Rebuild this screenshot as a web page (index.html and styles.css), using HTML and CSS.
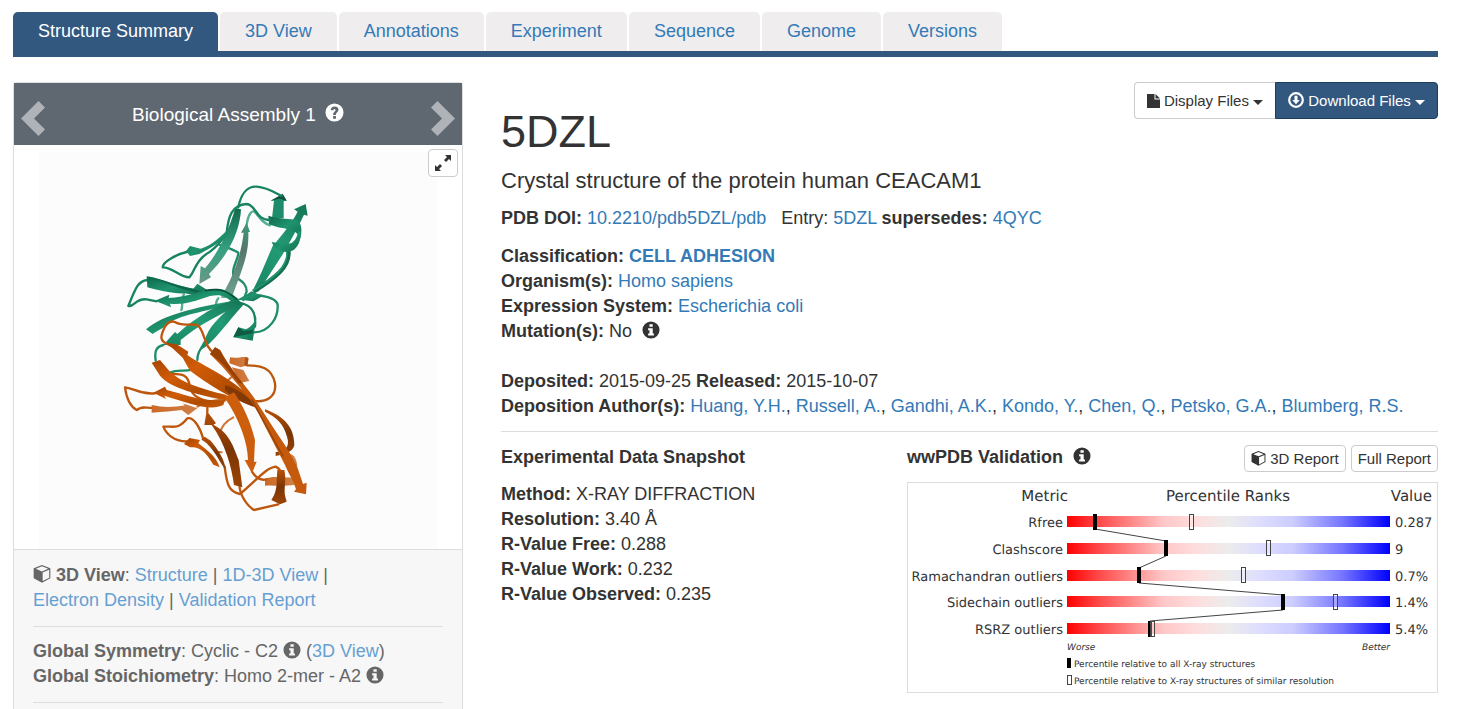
FILE: index.html
```html
<!DOCTYPE html>
<html lang="en">
<head>
	<meta charset="utf-8">
	<title>5DZL: Crystal structure of the protein human CEACAM1</title>
	<link rel="stylesheet" href="styles.css">
</head>
<body>
	<!-- shared icons -->
	<svg class="sprite" aria-hidden="true">
		<symbol id="icon-info" viewBox="0 0 20 20">
			<path fill="currentColor" fill-rule="evenodd" d="M10 .5a9.500 9.500 0 1 0 0 19a9.500 9.500 0 0 0 0-19zM8.300 3.500h3.600v3H8.300zM6.800 8h5.100v6h1.400v2.200H6.800V14h1.500v-3.800H6.800z"/>
		</symbol>
		<symbol id="icon-question" viewBox="0 0 20 20">
			<path fill="currentColor" fill-rule="evenodd" d="M10 .5a9.500 9.500 0 1 0 0 19a9.500 9.500 0 0 0 0-19zM8.500 13.800h3v2.700h-3zM6 7.700C6.200 5 7.700 3.800 10.100 3.800c2.500 0 4.100 1.300 4.100 3.400c0 2.600-2.700 2.800-2.700 5.400h-3c0-3.300 2.500-3.500 2.500-5.100c0-.7-.4-1.100-1-1.100c-.8 0-1 .5-1.100 1.300z"/>
		</symbol>
		<symbol id="icon-cube" viewBox="1 1 18 19">
			<path fill="currentColor" fill-rule="evenodd" d="M10 1l8.800 3.500v10.500L10 19.700L1.200 15V4.500zM10 2.300L3.500 5L10 7.800L16.500 5zM10.700 9v9l6.900-3.600V6.100z"/>
		</symbol>
	</svg>

	<nav>
		<ul class="tabs">
			<li><a class="tab active" href="#summary">Structure Summary</a></li>
			<li><a class="tab" href="#view">3D View</a></li>
			<li><a class="tab" href="#annotations">Annotations</a></li>
			<li><a class="tab" href="#experiment">Experiment</a></li>
			<li><a class="tab" href="#sequence">Sequence</a></li>
			<li><a class="tab" href="#genome">Genome</a></li>
			<li><a class="tab" href="#versions">Versions</a></li>
		</ul>
	</nav>

	<main class="columns">
		<section class="assembly">
			<div class="assembly-header">
				<button class="arrow" aria-label="Previous">
					<svg width="24" height="35" viewBox="0 0 24 35"><path fill="currentColor" d="M17.500 0L24 6.500L13 17.500L24 28.500L17.500 35L0 17.500z"/></svg>
				</button>
				<div class="assembly-title">Biological Assembly 1 <svg class="icon-help"><use href="#icon-question"/></svg></div>
				<button class="arrow" aria-label="Next">
					<svg width="24" height="35" viewBox="0 0 24 35"><path fill="currentColor" d="M6.500 0L24 17.500L6.500 35L0 28.500L11 17.500L0 6.500z"/></svg>
				</button>
			</div>
			<div class="assembly-image">
				<button class="expand" aria-label="Full screen">
					<svg width="16" height="16" viewBox="0 0 16 16"><path fill="currentColor" d="M10 0h6v6l-2-2L11 7L9 5l3-3zM0 10l2 2L5 9l2 2l-3 3L6 16H0z"/></svg>
				</button>
				<svg class="protein" viewBox="-213 -54 1194 1191" role="img" aria-label="Ribbon diagram of 5DZL">
					<defs>
						<linearGradient id="g1" x1="0" y1="0" x2="1" y2="1">
							<stop offset="0" stop-color="#0d654a"/>
							<stop offset=".5" stop-color="#1f946f"/>
							<stop offset="1" stop-color="#12704f"/>
						</linearGradient>
						<linearGradient id="g2" x1="1" y1="0" x2="0" y2="1">
							<stop offset="0" stop-color="#157556"/>
							<stop offset=".5" stop-color="#229b76"/>
							<stop offset="1" stop-color="#1a8562"/>
						</linearGradient>
						<linearGradient id="g3" x1="0" y1="0" x2="0" y2="1">
							<stop offset="0" stop-color="#126a4d"/>
							<stop offset=".55" stop-color="#35a080"/>
							<stop offset="1" stop-color="#6a9886"/>
						</linearGradient>
						<linearGradient id="g4" x1="0" y1="0" x2="0" y2="1">
							<stop offset="0" stop-color="#3d9a7b"/>
							<stop offset=".35" stop-color="#53776b"/>
							<stop offset="1" stop-color="#6fa390"/>
						</linearGradient>
						<linearGradient id="o1" x1="0" y1="0" x2="1" y2="1">
							<stop offset="0" stop-color="#a54400"/>
							<stop offset=".35" stop-color="#d15c08"/>
							<stop offset=".7" stop-color="#b04c00"/>
							<stop offset="1" stop-color="#c75a0c"/>
						</linearGradient>
						<linearGradient id="o2" x1="0" y1="0" x2="0" y2="1">
							<stop offset="0" stop-color="#b95008"/>
							<stop offset=".5" stop-color="#7a3505"/>
							<stop offset="1" stop-color="#9c4404"/>
						</linearGradient>
						<linearGradient id="o3" x1="0" y1="0" x2="1" y2="0">
							<stop offset="0" stop-color="#cb6a28"/>
							<stop offset="1" stop-color="#cf8047"/>
						</linearGradient>
					</defs>

					<!-- chain A -->
					<g fill="none" stroke="#1f8c6a" stroke-width="7" stroke-linecap="round" stroke-linejoin="round">
						<path stroke="#55ad92" d="M410 165C414 135 425 118 435 126C450 145 462 162 480 166"/>
						<path d="M330 225C350 232 370 238 385 248C385 270 365 290 370 315C385 330 410 335 410 365L400 390"/>
						<path stroke="#55ad92" d="M222 372C212 390 220 408 214 420M325 385C315 395 318 405 320 415"/>
						<path d="M160 525C135 530 134 550 137 572M285 515C270 540 262 550 262 570"/>
						<path d="M180 608C205 596 220 606 245 599"/>
						<path d="M435 375C470 378 500 385 503 405C505 440 480 488 430 487"/>
					</g>
					<path fill="url(#g4)" d="M410 158L420 186H415C418 260 390 310 365 385L332 383C370 320 392 260 401 188L393 188z"/>
					<path fill="url(#g3)" d="M378 115L393 118C390 180 360 250 297 312L303 322L268 342L272 288L285 295C330 240 352 190 375 118z"/>
					<path fill="url(#g2)" d="M552 118L587 102L593 137L582 134C560 180 545 205 520 250L445 365L428 362C450 320 470 270 488 228C520 190 545 160 563 125z"/>
					<path fill="none" stroke="#147152" stroke-width="13" d="M535 240C542 290 495 325 430 365"/>
					<path fill="none" stroke="#249a76" stroke-width="4" d="M530 245C537 290 490 325 428 362"/>
					<path fill="#1d8c6a" d="M482 92L518 72L530 92L521 94V145H486L492 92z"/>
					<path fill="#0d513c" d="M482 92L518 72L530 92L510 86z"/>
					<path fill="url(#g1)" d="M475 137C510 148 540 145 560 150C575 160 578 180 570 205C560 170 510 180 477 162z"/>
					<path fill="url(#g1)" d="M485 216C510 220 530 223 545 219C560 208 562 196 565 180L574 190C570 220 560 244 532 246C510 245 492 234 485 216z"/>
					<g fill="none" stroke="#188360" stroke-width="7" stroke-linecap="round" stroke-linejoin="round">
						<path d="M385 112C392 75 410 48 440 50C470 52 490 65 515 78"/>
						<path d="M350 188C355 140 365 105 410 102C440 105 435 150 480 150"/>
						<path d="M230 246C200 253 158 275 158 292C185 290 210 322 238 322C255 305 255 270 300 245C320 230 340 205 350 190"/>
						<path d="M112 330C85 333 78 350 55 408C75 410 75 385 110 388L140 394"/>
						<path d="M370 395C420 400 440 420 435 470"/>
					</g>
					<path fill="url(#g1)" d="M228 243L240 228L272 236C310 226 335 195 355 178L348 200C320 225 290 240 268 252L240 258z"/>
					<path fill="url(#g2)" d="M385 392C340 430 305 460 290 495L272 540C310 520 345 465 402 402z"/>
					<path fill="url(#g1)" d="M108 478C160 435 240 415 385 390V400C300 420 215 435 185 455C160 475 140 482 128 492z"/>
					<path fill="url(#g2)" d="M382 388C325 400 260 440 202 492L195 486L160 525H212L212 510C260 470 315 440 395 402z"/>
					<path fill="url(#g1)" d="M110 319C150 325 200 348 250 356L262 341L300 365C285 374 260 378 225 370C190 372 140 360 112 352z"/>
					<path fill="#0f674b" d="M112 319C170 330 200 350 250 356L290 370C250 374 200 350 112 319z"/>
					<path fill="url(#g1)" d="M135 392L178 374L176 384C230 382 270 360 320 356C350 356 370 375 390 390L368 397C345 376 330 372 300 378C250 395 220 405 180 401L183 412z"/>
					<path fill="none" stroke="#0b4f39" stroke-width="5" d="M285 362C330 353 350 362 385 392"/>
					<path fill="url(#g1)" d="M375 392L408 375L425 364L458 378L430 394L395 390z"/>
					<path fill="url(#g1)" d="M370 502L385 472L408 478C425 470 433 458 440 440L428 512z"/>
					<path fill="#0d5c43" d="M370 502L385 472L400 482L428 480L428 490z"/>

					<!-- chain B -->
					<g transform="translate(0 420)">
						<g fill="none" stroke="#cf7434" stroke-width="6" stroke-linecap="round">
							<path d="M330 370C335 345 350 332 370 322M262 290C290 275 320 265 345 272M318 425L335 427"/>
							<path d="M342 225C350 205 365 210 378 185M375 250L410 240"/>
						</g>
						<path fill="url(#o3)" d="M360 142C380 146 400 138 413 142V166L392 172L358 160z"/>
						<path fill="#b5520e" d="M405 142L416 144L412 170L403 165z"/>
						<path fill="url(#o3)" d="M365 172L400 180L418 213L392 218z"/>
						<path fill="url(#o3)" d="M465 507C490 495 520 505 548 502L553 525C520 530 490 525 465 527z"/>
						<path fill="#cf8149" d="M530 430C556 430 563 455 562 482L548 470z"/>
						<path fill="url(#o2)" d="M465 298C520 318 553 350 553 405C550 425 525 432 497 438V426C525 425 541 410 531 380C520 340 500 322 465 305z"/>
						<g fill="none" stroke="#bd570e" stroke-width="7" stroke-linecap="round" stroke-linejoin="round">
							<path d="M200 115C165 100 150 95 155 75C165 40 180 30 195 36C215 50 240 40 262 45C285 60 280 110 312 128"/>
							<path d="M413 166C450 166 485 172 495 220C500 260 470 280 425 272"/>
							<path d="M175 192C220 190 235 195 240 230C245 260 270 265 292 275V305"/>
							<path d="M135 250C90 255 75 235 45 232C50 270 62 290 80 300C95 288 105 294 128 294"/>
							<path d="M280 388C270 350 250 320 232 325C205 360 190 348 160 350C168 370 190 395 232 394"/>
							<path d="M344 470C350 520 355 545 390 552C440 510 470 472 497 470C507 475 512 480 513 490"/>
							<path d="M426 485C440 508 455 512 470 508"/>
							<path d="M388 525C390 560 415 590 432 600L505 583"/>
						</g>
						<path fill="url(#o3)" d="M125 285C160 293 190 292 225 286L218 280L262 295L235 315L215 300C190 303 160 306 125 308z"/>
						<path fill="url(#o1)" d="M130 248L165 230L170 240C220 252 270 275 345 270L340 285C300 305 240 280 163 257L168 267z"/>
						<path fill="url(#o1)" d="M125 158L150 150L180 185C220 220 270 235 350 255V272C270 255 180 235 150 197z"/>
						<path fill="url(#o1)" d="M170 98L200 103L235 125L232 135C290 175 345 190 440 275L438 293C360 265 290 220 240 182L218 143z"/>
						<path fill="#823905" d="M345 225C380 235 425 265 440 292C410 285 370 265 345 240z"/>
						<path fill="#cc5e0e" d="M343 262L372 247C400 290 420 330 435 390L432 455H440L426 490L404 450H414C413 400 390 330 343 262z"/>
						<path fill="url(#o2)" d="M290 302L318 340L310 344C360 370 370 410 386 450L397 532L372 525C365 470 345 400 305 345L283 345z"/>
						<path fill="url(#o1)" d="M222 402L238 384L270 390L265 400C290 420 320 440 329 472L310 464C290 430 270 408 240 412z"/>
						<path fill="url(#o2)" d="M274 388L284 380L302 392C325 420 345 450 347 480C330 460 320 430 290 400z"/>
						<path fill="#c65a0c" d="M315 112L330 120C360 175 400 220 430 260L475 330C510 385 545 430 565 480L579 522L590 518L588 553L552 545L558 538C550 510 535 490 525 465L445 310L420 268C380 220 350 180 300 132z"/>
						<path fill="#974204" d="M315 112L330 120C345 150 370 185 400 222L385 218C355 180 330 150 300 132z"/>
						<path fill="none" stroke="#95430a" stroke-width="4" d="M425 268C460 330 490 390 520 440"/>
						<path fill="url(#o2)" d="M502 480H523C530 510 520 540 526 560L530 575L510 583L484 570L492 556C503 530 499 510 502 480z"/>
					</g>
				</svg>
			</div>
			<div class="assembly-caption">
				<p><svg class="icon"><use href="#icon-cube"/></svg> <b>3D View</b>: <a href="#structure">Structure</a> | <a href="#1d-3d">1D-3D View</a> |<br>
				<a href="#density">Electron Density</a> | <a href="#validation">Validation Report</a></p>
				<hr>
				<p><b>Global Symmetry</b>: Cyclic - C2 <svg class="icon"><use href="#icon-info"/></svg> (<a href="#symmetry">3D View</a>)<br>
				<b>Global Stoichiometry</b>: Homo 2-mer - A2 <svg class="icon"><use href="#icon-info"/></svg></p>
				<hr>
			</div>
		</section>

		<section class="entry">
			<div class="entry-top">
				<h1>5DZL</h1>
				<div class="file-buttons">
					<button class="btn-file"><svg width="13" height="14" viewBox="0 0 13 14"><path fill="currentColor" d="M0 0h7.500v5.500H13V14H0zM8.500 0L13 4.500H8.500z"/></svg> Display Files <span class="caret"></span></button>
					<button class="btn-file primary"><svg width="16" height="16" viewBox="0 0 16 16"><circle cx="8" cy="8" r="6.800" fill="none" stroke="currentColor" stroke-width="2.200"/><path fill="currentColor" d="M6.500 3.800h3V8h2.300L8 12.200L4.200 8h2.300z"/></svg> Download Files <span class="caret"></span></button>
				</div>
			</div>
			<h2>Crystal structure of the protein human CEACAM1</h2>
			<p class="doi"><b>PDB DOI:</b> <a href="#doi">10.2210/pdb5DZL/pdb</a> &nbsp; Entry: <a href="#5dzl">5DZL</a> <b>supersedes:</b> <a href="#4qyc">4QYC</a></p>
			<ul class="facts">
				<li><b>Classification: <a href="#classification">CELL ADHESION</a></b></li>
				<li><b>Organism(s):</b> <a href="#organism">Homo sapiens</a></li>
				<li><b>Expression System:</b> <a href="#expression">Escherichia coli</a></li>
				<li><b>Mutation(s):</b> No &nbsp;<svg class="icon"><use href="#icon-info"/></svg></li>
			</ul>
			<ul class="facts deposit">
				<li><b>Deposited:</b> 2015-09-25 <b>Released:</b> 2015-10-07</li>
				<li><b>Deposition Author(s):</b> <a href="#huang">Huang, Y.H.</a>, <a href="#russell">Russell, A.</a>, <a href="#gandhi">Gandhi, A.K.</a>, <a href="#kondo">Kondo, Y.</a>, <a href="#chen">Chen, Q.</a>, <a href="#petsko">Petsko, G.A.</a>, <a href="#blumberg">Blumberg, R.S.</a></li>
			</ul>
			<hr>
			<div class="data">
				<div>
					<h3>Experimental Data Snapshot</h3>
					<ul class="facts snapshot">
						<li><b>Method:</b> X-RAY DIFFRACTION</li>
						<li><b>Resolution:</b> 3.40 Å</li>
						<li><b>R-Value Free:</b> 0.288</li>
						<li><b>R-Value Work:</b> 0.232</li>
						<li><b>R-Value Observed:</b> 0.235</li>
					</ul>
				</div>
				<div>
					<div class="validation-header">
						<h3>wwPDB Validation &nbsp;<svg class="icon"><use href="#icon-info"/></svg></h3>
						<button class="btn-small"><svg class="icon-small"><use href="#icon-cube"/></svg> 3D Report</button>
						<button class="btn-small">Full Report</button>
					</div>
					<svg class="chart" viewBox="0 0 529 209" role="img" aria-label="Percentile ranks">
						<defs>
							<linearGradient id="rank">
								<stop offset="0" stop-color="#ff0000"/>
								<stop offset=".1" stop-color="#ff4a4a"/>
								<stop offset=".3" stop-color="#ffc8c8"/>
								<stop offset=".4" stop-color="#ffdddd"/>
								<stop offset=".5" stop-color="#ececec"/>
								<stop offset=".6" stop-color="#ddddff"/>
								<stop offset=".7" stop-color="#ccccff"/>
								<stop offset=".85" stop-color="#7777ff"/>
								<stop offset="1" stop-color="#0000ff"/>
							</linearGradient>
						</defs>
						<g class="chart-head">
							<text x="160" y="18" text-anchor="end">Metric</text>
							<text x="320" y="18" text-anchor="middle">Percentile Ranks</text>
							<text x="524" y="18" text-anchor="end">Value</text>
						</g>
						<g class="chart-label" text-anchor="end">
							<text x="155" y="44">Rfree</text>
							<text x="155" y="71">Clashscore</text>
							<text x="155" y="98">Ramachandran outliers</text>
							<text x="155" y="124">Sidechain outliers</text>
							<text x="155" y="151">RSRZ outliers</text>
						</g>
						<g fill="url(#rank)">
							<rect x="159" y="33" width="323" height="11"/>
							<rect x="159" y="60" width="323" height="11"/>
							<rect x="159" y="87" width="323" height="11"/>
							<rect x="159" y="113" width="323" height="11"/>
							<rect x="159" y="140" width="323" height="11"/>
						</g>
						<path fill="none" stroke="#444" d="M187 46L258 58M258 73L231 85M231 100L375 112M375 127L242 138"/>
						<g>
							<rect x="185" y="31" width="4" height="16"/>
							<rect x="256" y="57" width="4" height="16"/>
							<rect x="229" y="84" width="4" height="16"/>
							<rect x="373" y="111" width="4" height="16"/>
							<rect x="240" y="138" width="4" height="16"/>
							<rect x="159" y="175" width="4" height="10"/>
						</g>
						<g fill="#fff" fill-opacity=".3" stroke="#444">
							<rect x="281.500" y="31.500" width="4" height="15"/>
							<rect x="358.500" y="57.500" width="4" height="15"/>
							<rect x="333.500" y="84.500" width="4" height="15"/>
							<rect x="425.500" y="111.500" width="4" height="15"/>
							<rect x="242.500" y="138.500" width="4" height="15"/>
							<rect x="159.500" y="192.500" width="4" height="9"/>
						</g>
						<g class="chart-label">
							<text x="487" y="44">0.287</text>
							<text x="487" y="71">9</text>
							<text x="487" y="98">0.7%</text>
							<text x="487" y="124">1.4%</text>
							<text x="487" y="151">5.4%</text>
						</g>
						<g class="chart-note">
							<text class="slanted" x="159" y="167">Worse</text>
							<text class="slanted" x="482" y="167" text-anchor="end">Better</text>
							<text x="166" y="184">Percentile relative to all X-ray structures</text>
							<text x="166" y="201">Percentile relative to X-ray structures of similar resolution</text>
						</g>
					</svg>
				</div>
			</div>
		</section>
	</main>
</body>
</html>
```

FILE: styles.css
```css
* {
	box-sizing: border-box;
}

body {
	display: flex;
	flex-direction: column;
	min-height: 100vh;
	margin: 0;
	padding: 12px 20px 0 13px;
	background: #fff;
	color: #333;
	font-family: "Liberation Sans", Arial, sans-serif;
	font-size: 18px;
	line-height: 25px;
}

h1, h2, h3, p, ul {
	margin: 0;
	padding: 0;
}

ul {
	list-style: none;
}

a {
	color: #337ab7;
	text-decoration: none;
}

button {
	font-family: inherit;
	cursor: pointer;
}

hr {
	margin: 0;
	border: 0;
	border-top: 1px solid #ddd;
}

.sprite {
	display: block;
	width: 0;
	height: 0;
	position: absolute;
}

.icon {
	width: 18px;
	height: 18px;
	vertical-align: -2px;
}

/* tabs */
.tabs {
	display: flex;
	gap: 2px;
	border-bottom: 6px solid #325880;
}

.tab {
	display: block;
	height: 39px;
	padding: 7px 25px;
	border-radius: 5px 5px 0 0;
	background: #efedee;
}

.tab.active {
	background: #325880;
	color: #fff;
}

.columns {
	display: grid;
	grid-template-columns: 450px minmax(0, 1fr);
	gap: 38px;
	flex: 1;
	margin-top: 25px;
}

/* assembly panel */
.assembly {
	display: flex;
	flex-direction: column;
	border: 1px solid #ddd;
	border-bottom: 0;
	border-radius: 4px 4px 0 0;
}

.assembly-header {
	display: flex;
	align-items: center;
	justify-content: space-between;
	height: 62px;
	padding: 0 7px;
	background: #5f6871;
	color: #fff;
}

.assembly-title {
	font-size: 19px;
}

.icon-help {
	width: 19px;
	height: 19px;
	margin-left: 4px;
	vertical-align: -1px;
}

.arrow {
	padding: 9px 0 0;
	border: 0;
	background: none;
	color: #afb3b8;
}

.arrow svg {
	display: block;
}

.assembly-image {
	position: relative;
	padding: 7px 25px 0;
}

.protein {
	display: block;
	width: 100%;
	background: #fcfcfc;
}

.expand {
	position: absolute;
	top: 4px;
	right: 4px;
	width: 30px;
	height: 28px;
	padding: 4px 6px;
	border: 1px solid #ccc;
	border-radius: 4px;
	background: #fff;
	color: #333;
}

.expand svg {
	display: block;
}

.assembly-caption {
	flex: 1;
	padding: 13px 19px 0;
	border-top: 1px solid #ddd;
	background: #f7f7f7;
	color: #666;
}

.assembly-caption a {
	color: #669fd2;
}

.assembly-caption hr {
	margin: 13px 0 12px;
}

.assembly-caption hr:last-child {
	margin-bottom: 0;
}

/* entry */
.entry-top {
	display: flex;
	justify-content: space-between;
	align-items: flex-start;
}

h1 {
	padding-top: 25px;
	font-size: 45px;
	font-weight: normal;
	line-height: 50px;
}

h2 {
	margin-top: 11px;
	font-size: 22px;
	font-weight: normal;
}

h3 {
	font-size: 18px;
}

.file-buttons {
	display: flex;
}

.btn-file {
	height: 37px;
	padding: 0 12px;
	border: 1px solid #ccc;
	border-right: 0;
	border-radius: 4px 0 0 4px;
	background: #fff;
	color: #333;
	font-size: 15px;
}

.btn-file svg {
	vertical-align: -2px;
}

.btn-file.primary {
	border: 1px solid #1e3c5c;
	border-radius: 0 4px 4px 0;
	background: #325880;
	color: #fff;
}

.caret {
	display: inline-block;
	border-top: 5px solid;
	border-left: 5px solid transparent;
	border-right: 5px solid transparent;
	vertical-align: 1px;
}

.doi {
	margin-top: 13px;
}

.facts {
	margin-top: 13px;
}

.deposit {
	margin: 25px 0 12px;
}

.snapshot {
	margin-top: 12px;
}

.data {
	display: grid;
	grid-template-columns: 368px minmax(0, 1fr);
	gap: 38px;
	margin-top: 13px;
}

.validation-header {
	display: flex;
	gap: 5px;
	margin-bottom: 10px;
}

.validation-header h3 {
	flex: 1;
}

.btn-small {
	height: 27px;
	padding: 0 6px;
	border: 1px solid #ccc;
	border-radius: 4px;
	background: #fff;
	color: #333;
	font-size: 15px;
}

.icon-small {
	width: 15px;
	height: 15px;
	vertical-align: -2px;
}

.chart {
	display: block;
	width: 100%;
	border: 1px solid #ddd;
	fill: #000;
	font-family: "DejaVu Sans", sans-serif;
	text-rendering: geometricPrecision;
}

.chart text {
	fill: #333;
}

.chart-head {
	font-size: 15px;
}

.chart-label {
	font-size: 13px;
}

.chart-note {
	font-size: 9px;
}

.slanted {
	font-style: italic;
}
```
